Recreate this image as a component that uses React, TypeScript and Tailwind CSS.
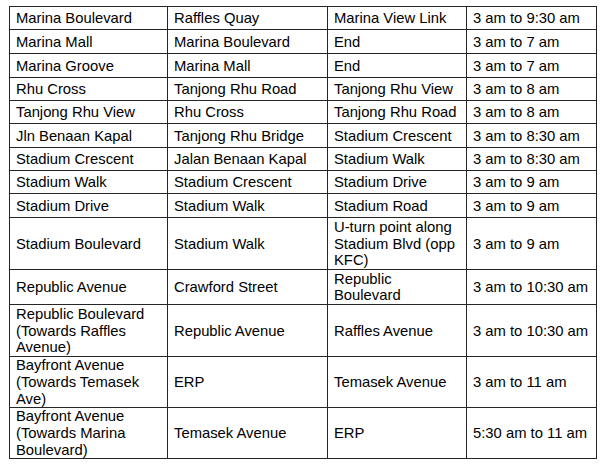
const ROWS: { h: string; cells: string[][] }[] = [
  { h: "h-[22px]", cells: [["Marina Boulevard"], ["Raffles Quay"], ["Marina View Link"], ["3 am to 9:30 am"]] },
  { h: "h-[23px]", cells: [["Marina Mall"], ["Marina Boulevard"], ["End"], ["3 am to 7 am"]] },
  { h: "h-[23px]", cells: [["Marina Groove"], ["Marina Mall"], ["End"], ["3 am to 7 am"]] },
  { h: "h-[22px]", cells: [["Rhu Cross"], ["Tanjong Rhu Road"], ["Tanjong Rhu View"], ["3 am to 8 am"]] },
  { h: "h-[22px]", cells: [["Tanjong Rhu View"], ["Rhu Cross"], ["Tanjong Rhu Road"], ["3 am to 8 am"]] },
  { h: "h-[23px]", cells: [["Jln Benaan Kapal"], ["Tanjong Rhu Bridge"], ["Stadium Crescent"], ["3 am to 8:30 am"]] },
  { h: "h-[22px]", cells: [["Stadium Crescent"], ["Jalan Benaan Kapal"], ["Stadium Walk"], ["3 am to 8:30 am"]] },
  { h: "h-[22px]", cells: [["Stadium Walk"], ["Stadium Crescent"], ["Stadium Drive"], ["3 am to 9 am"]] },
  { h: "h-[23px]", cells: [["Stadium Drive"], ["Stadium Walk"], ["Stadium Road"], ["3 am to 9 am"]] },
  {
    h: "h-[51px]",
    cells: [
      ["Stadium Boulevard"],
      ["Stadium Walk"],
      ["U-turn point along", "Stadium Blvd (opp", "KFC)"],
      ["3 am to 9 am"],
    ],
  },
  {
    h: "h-[34px]",
    cells: [["Republic Avenue"], ["Crawford Street"], ["Republic", "Boulevard"], ["3 am to 10:30 am"]],
  },
  {
    h: "h-[51px]",
    cells: [
      ["Republic Boulevard", "(Towards Raffles", "Avenue)"],
      ["Republic Avenue"],
      ["Raffles Avenue"],
      ["3 am to 10:30 am"],
    ],
  },
  {
    h: "h-[50px]",
    cells: [["Bayfront Avenue", "(Towards Temasek", "Ave)"], ["ERP"], ["Temasek Avenue"], ["3 am to 11 am"]],
  },
  {
    h: "h-[50px]",
    cells: [
      ["Bayfront Avenue", "(Towards Marina", "Boulevard)"],
      ["Temasek Avenue"],
      ["ERP"],
      ["5:30 am to 11 am"],
    ],
  },
];

export default function App() {
  return (
    <div className="w-[600px] h-[464px] bg-white pt-[6px] pl-[9px]" style={{ fontFamily: '"Liberation Sans", Arial, sans-serif' }}>
      <div className="inline-grid grid-cols-[157px_159px_138px_129px] gap-px bg-[#262626] border border-[#262626] text-[14.8px] leading-[16.7px] text-black">
        {ROWS.map((row, r) =>
          row.cells.map((lines, c) => (
            <div key={`${r}-${c}`} className={`${row.h} bg-white flex flex-col justify-center pl-[6px] whitespace-nowrap`}>
              {lines.map((line) => (
                <span key={line}>{line}</span>
              ))}
            </div>
          )),
        )}
      </div>
    </div>
  );
}
